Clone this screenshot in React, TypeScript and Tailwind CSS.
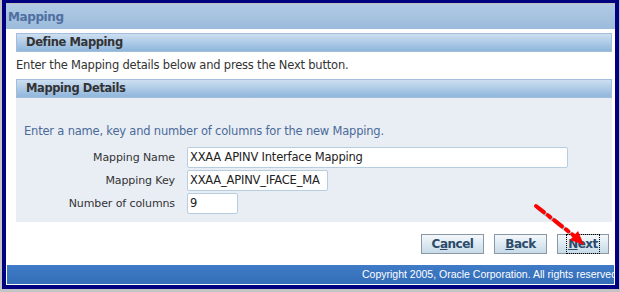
import type { ReactNode } from "react";

const font = { fontFamily: '"DejaVu Sans", Tahoma, sans-serif' };

function SubHeader({ children }: { children: ReactNode }) {
  return (
    <div className="flex h-[19px] items-center border border-[#a3bedb] bg-gradient-to-b from-[#cddff0] to-[#8fb6dc] pl-[9px] text-[11.5px] font-bold tracking-[-0.4px] text-[#333333]">
      {children}
    </div>
  );
}

function Field({ label, value, width }: { label: string; value: string; width: string }) {
  return (
    <div className="flex h-[23px] items-center">
      <div className="w-[163px] pr-[12px] text-right text-[11px] tracking-[-0.1px] text-[#333333]">{label}</div>
      <div
        className={`flex h-[21px] items-center overflow-hidden whitespace-nowrap rounded-[2px] border border-[#b7cde0] bg-white pl-[2px] text-[11.5px] tracking-[-0.2px] text-[#222222] ${width}`}
      >
        {value}
      </div>
    </div>
  );
}

function Btn({ pre, key1, post, width, focus }: { pre: string; key1: string; post: string; width: string; focus?: boolean }) {
  return (
    <button
      type="button"
      className={`flex h-[20px] items-center justify-center border border-[#8a98a6] bg-gradient-to-b from-[#f4f8fb] to-[#c6dbe8] text-[12px] font-bold tracking-[-0.5px] text-[#2c4a6a] ${width}`}
    >
      <span className={focus ? "px-[1px] outline outline-1 outline-dotted outline-black" : ""}>
        {pre}
        <span className="underline">{key1}</span>
        {post}
      </span>
    </button>
  );
}

export default function App() {
  return (
    <div className="h-[292px] w-[620px] bg-[#c4c4c4] pb-[3px] pl-[2px] pr-[1px]" style={font}>
      <div className="relative flex h-full flex-col border-x-4 border-b-4 border-t-[3px] border-[#000080] bg-white">
        <div className="h-px bg-[#c0c0c0]" />
        <div className="flex h-[25px] items-center bg-gradient-to-b from-[#b0cae4] to-[#9cbbdb] pl-[2px] text-[12px] font-bold tracking-[-0.4px] text-[#4f6fa0]">
          Mapping
        </div>
        <div className="flex flex-1 flex-col pl-[10px] pr-[3px] pt-[4px]">
          <SubHeader>Define Mapping</SubHeader>
          <div className="mt-[3px] h-[20px] text-[11.5px] leading-[20px] tracking-[-0.2px] text-[#333333]">
            Enter the Mapping details below and press the Next button.
          </div>
          <div className="mt-[4px]">
            <SubHeader>Mapping Details</SubHeader>
          </div>
          <div className="h-[124px] bg-[#e9eef5] pl-[8px] pt-[25px]">
            <div className="mb-[6px] text-[11.5px] tracking-[-0.2px] text-[#4a6a98]">
              Enter a name, key and number of columns for the new Mapping.
            </div>
            <Field label="Mapping Name" value="XXAA APINV Interface Mapping" width="w-[381px]" />
            <Field label="Mapping Key" value="XXAA_APINV_IFACE_MA" width="w-[141px]" />
            <Field label="Number of columns" value="9" width="w-[51px]" />
          </div>
          <div className="mt-[12px] flex justify-end gap-[10px] pr-[3px]">
            <Btn pre="C" key1="a" post="ncel" width="w-[63px]" />
            <Btn pre="" key1="B" post="ack" width="w-[53px]" />
            <Btn pre="" key1="N" post="ext" width="w-[52px]" focus />
          </div>
        </div>
        <div
          className="mx-[1px] mb-[1px] flex h-[19px] items-center justify-end overflow-hidden whitespace-nowrap bg-gradient-to-b from-[#3f7bc6] to-[#336db8] text-[10.5px] text-white"
          style={{ fontFamily: '"Liberation Sans", Arial, sans-serif' }}
        >
          <span className="-mr-[3px]">Copyright 2005, Oracle Corporation. All rights reserved</span>
        </div>
        <svg className="pointer-events-none absolute left-[526px] top-[200px]" width="56" height="46" viewBox="0 0 56 46">
          <line x1="6" y1="5" x2="47" y2="37" stroke="#000000" strokeOpacity="0.25" strokeWidth="4" strokeDasharray="10 5 3 5" strokeLinecap="round" />
          <line x1="4" y1="3" x2="45" y2="35" stroke="#ff0000" strokeWidth="4" strokeDasharray="10 5 3 5" strokeLinecap="round" />
          <polygon points="52,42 38,37 46,28" fill="#ff0000" />
        </svg>
      </div>
    </div>
  );
}
